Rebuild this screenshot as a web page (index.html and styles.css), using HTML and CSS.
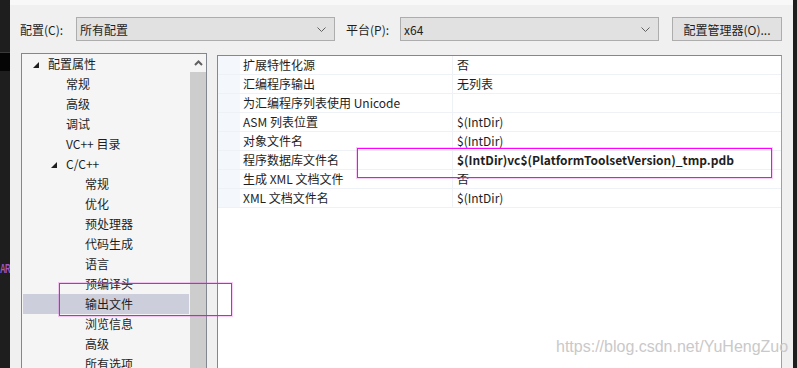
FILE: index.html
```html
<!DOCTYPE html>
<html lang="zh-CN">
<head>
  <meta charset="UTF-8">
  <title>属性页</title>
  <link rel="stylesheet" href="styles.css">
</head>
<body>

<div class="screen">
  <div class="edge-left">
    <div class="edge-band"></div>
    <span class="edge-text">AR</span>
  </div>

  <div class="dialog">
    <div class="toolbar">
      <label class="tool-label first">配置(C):</label>
      <div class="combo">
        <span>所有配置</span>
        <svg class="chevron" width="9" height="5" viewBox="0 0 9 5"><polyline points="0.5,0.5 4.5,4.5 8.5,0.5" fill="none" stroke="#606060" stroke-width="1"/></svg>
      </div>
      <label class="tool-label second">平台(P):</label>
      <div class="combo">
        <span>x64</span>
        <svg class="chevron" width="9" height="5" viewBox="0 0 9 5"><polyline points="0.5,0.5 4.5,4.5 8.5,0.5" fill="none" stroke="#606060" stroke-width="1"/></svg>
      </div>
      <button class="manager">配置管理器(O)...</button>
    </div>

    <div class="content">
      <div class="tree">
        <ul class="tree-list">
          <li class="lvl0"><svg class="twisty" width="6" height="6" viewBox="0 0 6 6"><polygon points="6,0 6,6 0,6" fill="#1e1e1e"/></svg>配置属性</li>
          <li class="lvl1">常规</li>
          <li class="lvl1">高级</li>
          <li class="lvl1">调试</li>
          <li class="lvl1">VC++ 目录</li>
          <li class="lvl1 open"><svg class="twisty" width="6" height="6" viewBox="0 0 6 6"><polygon points="6,0 6,6 0,6" fill="#1e1e1e"/></svg>C/C++</li>
          <li class="lvl2">常规</li>
          <li class="lvl2">优化</li>
          <li class="lvl2">预处理器</li>
          <li class="lvl2">代码生成</li>
          <li class="lvl2">语言</li>
          <li class="lvl2">预编译头</li>
          <li class="lvl2 selected">输出文件</li>
          <li class="lvl2">浏览信息</li>
          <li class="lvl2">高级</li>
          <li class="lvl2">所有选项</li>
        </ul>
        <div class="scrollbar">
          <div class="scroll-btn">
            <svg width="9" height="6" viewBox="0 0 9 6"><polyline points="1,5 4.5,1.5 8,5" fill="none" stroke="#606060" stroke-width="2"/></svg>
          </div>
          <div class="scroll-thumb"></div>
        </div>
      </div>

      <div class="grid">
        <div class="row"><div class="gutter"></div><div class="name">扩展特性化源</div><div class="value">否</div></div>
        <div class="row"><div class="gutter"></div><div class="name">汇编程序输出</div><div class="value">无列表</div></div>
        <div class="row"><div class="gutter"></div><div class="name">为汇编程序列表使用 Unicode</div><div class="value"></div></div>
        <div class="row"><div class="gutter"></div><div class="name">ASM 列表位置</div><div class="value">$(IntDir)</div></div>
        <div class="row"><div class="gutter"></div><div class="name">对象文件名</div><div class="value">$(IntDir)</div></div>
        <div class="row"><div class="gutter"></div><div class="name">程序数据库文件名</div><div class="value bold">$(IntDir)vc$(PlatformToolsetVersion)_tmp.pdb</div></div>
        <div class="row"><div class="gutter"></div><div class="name">生成 XML 文档文件</div><div class="value">否</div></div>
        <div class="row"><div class="gutter"></div><div class="name">XML 文档文件名</div><div class="value">$(IntDir)</div></div>
      </div>
    </div>
  </div>

  <div class="edge-right"></div>

  <!-- annotation boxes drawn over the screenshot -->
  <div class="mark mark-value"></div>
  <div class="mark mark-node"></div>
  <div class="watermark">https://blog.csdn.net/YuHengZuo</div>
</div>

</body>
</html>
```

FILE: styles.css
```css
body {
  margin: 0;
  font-family: "Noto Sans CJK SC", "Noto Sans", sans-serif;
  font-size: 12px;
  color: #1e1e1e;
  overflow: hidden;
}

.screen {
  position: relative;
  display: flex;
  width: 797px;
  height: 368px;
  overflow: hidden;
}

.edge-left {
  width: 10px;
  flex: none;
  background: #1e1e1e;
  overflow: hidden;
  position: relative;
}

.edge-band {
  margin-top: 52px;
  height: 18px;
  background: #050505;
  border-top: 1px solid #3a3a3a;
}

.edge-text {
  position: absolute;
  left: 0;
  top: 261px;
  font-family: "Liberation Sans", sans-serif;
  font-weight: bold;
  font-size: 13px;
  letter-spacing: -1px;
  color: #a455c8;
  transform: scaleX(0.6);
  transform-origin: left center;
}

.edge-right {
  width: 4px;
  flex: none;
  background: #1e1e1e;
}

.dialog {
  flex: 1;
  background: #f0f0f0;
  border-top: 5px solid #f8f8f8;
  display: flex;
  flex-direction: column;
}

.toolbar {
  display: flex;
  align-items: center;
  height: 24px;
  margin-top: 12px;
}

.tool-label {
  color: #1e1e1e;
}

.tool-label.first {
  width: 56px;
  padding-left: 10px;
  box-sizing: content-box;
}

.tool-label.second {
  width: 54px;
  margin-left: 11px;
}

.combo {
  width: 259px;
  height: 24px;
  box-sizing: border-box;
  background: #e1e1e1;
  border: 1px solid #adadad;
  display: flex;
  align-items: center;
  justify-content: space-between;
  padding: 0 8px 0 3px;
}

.chevron {
  margin-top: 1px;
}

.manager {
  margin-left: 13px;
  width: 110px;
  height: 24px;
  box-sizing: border-box;
  background: #e1e1e1;
  border: 1px solid #adadad;
  font-family: inherit;
  font-size: 12px;
  color: #1e1e1e;
  padding: 0;
}

.content {
  display: flex;
  align-items: flex-start;
  margin-top: 12px;
  padding-left: 11px;
  flex: 1;
}

.tree {
  width: 186px;
  height: 330px;
  box-sizing: border-box;
  border: 1px solid #828790;
  background: #f5f5f5;
  display: flex;
}

.tree-list {
  list-style: none;
  margin: 0;
  padding: 0 0 0 1px;
  width: 166px;
}

.tree-list li {
  height: 20px;
  line-height: 20px;
  display: flex;
  align-items: center;
  white-space: nowrap;
}

.twisty {
  margin-right: 9px;
  margin-top: 1px;
}

.lvl0 { padding-left: 10px; }
.lvl1 { padding-left: 43px; }
.lvl1.open { padding-left: 28px; }
.lvl2 { padding-left: 62px; }

.tree-list li.selected {
  background: #cccedb;
}

.scrollbar {
  width: 16px;
  margin-left: 1px;
  display: flex;
  flex-direction: column;
}

.scroll-btn {
  height: 18px;
  display: flex;
  align-items: center;
  justify-content: center;
}

.scroll-thumb {
  flex: 1;
  background: #cdcdcd;
}

.grid {
  margin-left: 10px;
  margin-top: 2px;
  width: 565px;
  height: 320px;
  box-sizing: border-box;
  border: 1px solid #828790;
  border-right-color: #a0a0a0;
  background: #fff;
}

.row {
  display: flex;
  height: 19px;
  box-sizing: border-box;
  border-bottom: 1px solid #eef2f6;
}

.gutter {
  width: 22px;
  background: #f4f7fc;
}

.name {
  width: 213px;
  padding-left: 3px;
  box-sizing: border-box;
  line-height: 18px;
  border-right: 1px solid #eef2f6;
  white-space: nowrap;
}

.value {
  flex: 1;
  padding-left: 4px;
  line-height: 18px;
  white-space: nowrap;
}

.value.bold {
  font-weight: bold;
  font-size: 12px;
}

.mark {
  position: absolute;
  z-index: 2;
  border: 1px solid #ff00ff;
  box-shadow: 0 0 0 1px rgba(230, 60, 230, 0.25);
}

.mark-value {
  left: 357px;
  top: 148px;
  width: 413px;
  height: 28px;
}

.mark-node {
  left: 59px;
  top: 283px;
  width: 171px;
  height: 31px;
}

.watermark {
  position: absolute;
  z-index: 1;
  left: 556px;
  top: 338px;
  font-family: "Liberation Sans", sans-serif;
  font-size: 16px;
  color: #c9c9c9;
  white-space: nowrap;
}
```
